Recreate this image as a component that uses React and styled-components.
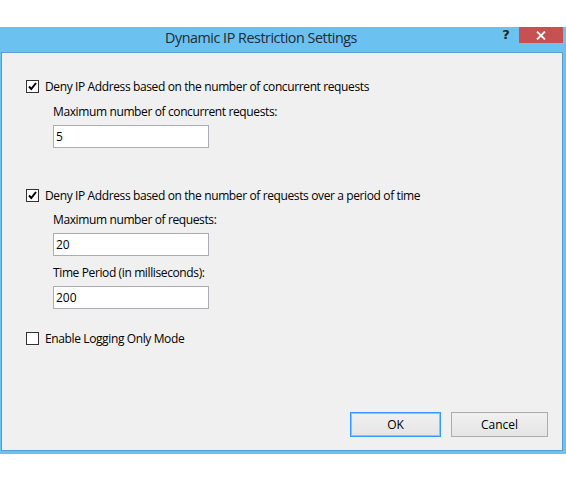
import React, { useState } from "react";
import styled, { createGlobalStyle } from "styled-components";

const GlobalStyle = createGlobalStyle`
  html, body {
    margin: 0;
    padding: 0;
    background: #ffffff;
  }
  body {
    font-family: "Open Sans", "Noto Sans", Arial, sans-serif;
  }
`;

const Page = styled.div`
  width: 566px;
  height: 490px;
  padding-top: 27px;
  box-sizing: border-box;
  background: #ffffff;
  overflow: hidden;
`;

const Window = styled.div`
  width: 566px;
  background: #6bc1f0;
  border-left: 1px solid #6bc1f0;
  border-right: 3px solid #6bc1f0;
  border-bottom: 3px solid #6bc1f0;
  box-sizing: border-box;
  display: flex;
  flex-direction: column;
`;

const TitleBar = styled.div`
  height: 25px;
  display: flex;
  align-items: flex-start;
`;

const Title = styled.div`
  flex: 1;
  padding-left: 26px;
  text-align: center;
  font-size: 14.3px;
  line-height: 22px;
  color: #1e2b33;
  letter-spacing: -0.45px;
`;

const HelpButton = styled.div`
  width: 22px;
  height: 16px;
  margin-right: 2px;
  font-family: "DejaVu Sans", sans-serif;
  font-weight: bold;
  font-size: 13px;
  line-height: 15px;
  text-align: center;
  color: #222;
`;

const CloseButton = styled.div`
  width: 44px;
  height: 16px;
  background: #c75050;
  display: flex;
  align-items: center;
  justify-content: center;
`;

const Client = styled.div`
  height: 399px;
  box-sizing: border-box;
  border: 1px solid #5a9dcc;
  background: #f0f0f0;
  padding: 25px 0 13px 24px;
  display: flex;
  flex-direction: column;
  font-size: 12px;
  color: #000;
`;

const CheckRow = styled.label`
  display: flex;
  align-items: center;
  height: 16px;
  gap: 6px;
  margin-top: ${({ $top }) => $top || 0}px;
  cursor: default;
  letter-spacing: -0.38px;
`;

const Box = styled.span`
  width: 13px;
  height: 13px;
  box-sizing: border-box;
  border: 1px solid #333;
  background: #fff;
  display: flex;
  align-items: center;
  justify-content: center;
`;

const Group = styled.div`
  margin-left: 27px;
  display: flex;
  flex-direction: column;
`;

const FieldLabel = styled.div`
  line-height: 16px;
  margin-top: ${({ $top }) => $top ?? 9}px;
  letter-spacing: -0.38px;
`;

const TextBox = styled.input`
  width: 156px;
  height: 23px;
  box-sizing: border-box;
  margin-top: 5px;
  border: 1px solid #abadb3;
  background: #fff;
  padding: 0 0 0 2px;
  font-family: inherit;
  font-size: 12px;
  color: #000;
  outline: none;
`;

const Footer = styled.div`
  margin-top: auto;
  display: flex;
  justify-content: flex-end;
  gap: 10px;
  padding-right: 14px;
`;

const Button = styled.button`
  width: ${({ $w }) => $w}px;
  height: 25px;
  box-sizing: border-box;
  border: 1px solid ${({ $primary }) => ($primary ? "#3399ff" : "#acacac")};
  box-shadow: ${({ $primary }) => ($primary ? "inset 0 0 0 1px #8cc3fa" : "none")};
  background: linear-gradient(#f0f0f0, #e5e5e5);
  font-family: inherit;
  font-size: 12px;
  color: #000;
  padding: 0;
`;

const Check = ({ checked }) => (
  <Box>
    {checked && (
      <svg width="9" height="9" viewBox="0 0 9 9">
        <path d="M1 4.5 L3.3 7 L8 1" fill="none" stroke="#000" strokeWidth="2" />
      </svg>
    )}
  </Box>
);

export default function App() {
  const [concurrent, setConcurrent] = useState(true);
  const [overTime, setOverTime] = useState(true);
  const [logging, setLogging] = useState(false);

  return (
    <Page>
      <GlobalStyle />
      <Window>
        <TitleBar>
          <Title>Dynamic IP Restriction Settings</Title>
          <HelpButton>?</HelpButton>
          <CloseButton>
            <svg width="10" height="9" viewBox="0 0 10 9">
              <path d="M1 0.5 L9 8.5 M9 0.5 L1 8.5" stroke="#fff" strokeWidth="1.8" />
            </svg>
          </CloseButton>
        </TitleBar>
        <Client>
          <CheckRow onClick={() => setConcurrent(!concurrent)}>
            <Check checked={concurrent} />
            Deny IP Address based on the number of concurrent requests
          </CheckRow>
          <Group>
            <FieldLabel $top={10}>Maximum number of concurrent requests:</FieldLabel>
            <TextBox defaultValue="5" />
          </Group>

          <CheckRow $top={39} onClick={() => setOverTime(!overTime)}>
            <Check checked={overTime} />
            Deny IP Address based on the number of requests over a period of time
          </CheckRow>
          <Group>
            <FieldLabel>Maximum number of requests:</FieldLabel>
            <TextBox defaultValue="20" />
            <FieldLabel>Time Period (in milliseconds):</FieldLabel>
            <TextBox defaultValue="200" />
          </Group>

          <CheckRow $top={21} onClick={() => setLogging(!logging)}>
            <Check checked={logging} />
            Enable Logging Only Mode
          </CheckRow>

          <Footer>
            <Button $primary $w={91}>OK</Button>
            <Button $w={97}>Cancel</Button>
          </Footer>
        </Client>
      </Window>
    </Page>
  );
}
